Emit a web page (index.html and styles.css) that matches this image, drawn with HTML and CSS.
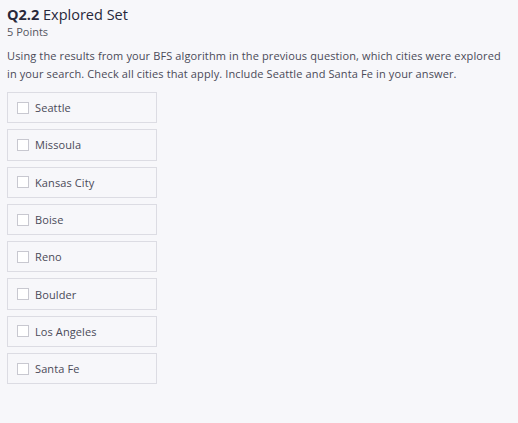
FILE: index.html
```html
<!DOCTYPE html>
<html>
<head>
<meta charset="utf-8">
<link rel="stylesheet" href="styles.css">
</head>
<body>
<div class="question">
  <h2 class="title"><b>Q2.2</b> Explored Set</h2>
  <div class="points">5 Points</div>
  <p class="prompt">Using the results from your BFS algorithm in the previous question, which cities were explored in your search. Check all cities that apply. Include Seattle and Santa Fe in your answer.</p>
  <div class="options">
    <label class="option"><span class="box"></span><span>Seattle</span></label>
    <label class="option"><span class="box"></span><span>Missoula</span></label>
    <label class="option"><span class="box"></span><span>Kansas City</span></label>
    <label class="option"><span class="box"></span><span>Boise</span></label>
    <label class="option"><span class="box"></span><span>Reno</span></label>
    <label class="option"><span class="box"></span><span>Boulder</span></label>
    <label class="option"><span class="box"></span><span>Los Angeles</span></label>
    <label class="option"><span class="box"></span><span>Santa Fe</span></label>
  </div>
</div>
</body>
</html>
```
FILE: styles.css
```css
html, body {
  margin: 0;
  padding: 0;
  background: #f7f7fa;
}
body {
  font-family: "Open Sans", "Noto Sans", sans-serif;
  color: #3d3d4e;
}
.question {
  padding: 5px 12px 5px 7px;
}
.title {
  margin: 0;
  font-size: 14.5px;
  font-weight: 400;
  line-height: 20px;
  color: #28283a;
}
.title b {
  font-weight: 700;
}
.points {
  font-size: 11px;
  line-height: 13px;
  color: #55555f;
}
.prompt {
  margin: 9px 0 9px;
  font-size: 11px;
  line-height: 18px;
  letter-spacing: 0.12px;
  color: #4a4a58;
}
.options {
  display: flex;
  flex-direction: column;
  gap: 6px;
}
.option {
  box-sizing: border-box;
  width: 150px;
  height: 31.3px;
  border: 1px solid #dcdce3;
  display: flex;
  align-items: center;
  gap: 6px;
  padding-left: 9px;
  font-size: 11px;
  letter-spacing: 0.1px;
  color: #4a4a58;
}
.box {
  box-sizing: border-box;
  width: 12px;
  height: 12px;
  border: 1px solid #c8c8d0;
  background: #fff;
}
```
